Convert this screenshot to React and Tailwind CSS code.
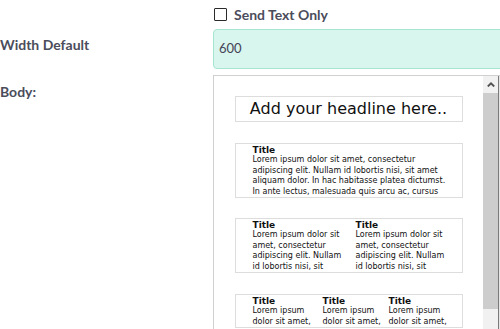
import React from "react";

const label = "text-[14px] font-bold text-[#4b4d5c] leading-[20px]";
const lato = { fontFamily: "Lato, 'Noto Sans', sans-serif" };
const dv = { fontFamily: "'DejaVu Sans', Verdana, sans-serif" };

function Col({ lines }) {
  return (
    <div>
      <div className="text-[9px] font-bold leading-[10px] whitespace-nowrap">Title</div>
      {lines.map((l, i) => (
        <div key={i} className="text-[8px] leading-[10.5px] whitespace-nowrap">
          {l}
        </div>
      ))}
    </div>
  );
}

export default function App() {
  return (
    <div className="w-[500px] h-[329px] overflow-hidden bg-white" style={lato}>
      <div className="flex h-[29px]">
        <div className="w-[213px] shrink-0" />
        <div className="flex items-center gap-[7px] pl-px">
          <div className="w-[13px] h-[13px] border border-[#2a2a2a] rounded-[1px] bg-white" />
          <span className={label}>Send Text Only</span>
        </div>
      </div>
      <div className="flex">
        <div className={`w-[213px] shrink-0 pt-[6px] ${label}`}>Width Default</div>
        <div className="w-[300px] shrink-0 h-[40px] flex items-center pl-[5px] bg-[#d8f5ee] border border-[#a6e6d1] rounded-[4px] text-[13px] text-[#444455]">
          600
        </div>
      </div>
      <div className="flex mt-[6px]">
        <div className={`w-[213px] shrink-0 pt-[7px] ${label}`}>Body:</div>
        <div className="w-[287px] shrink-0 h-[260px] flex border-t border-l border-[#d0d0d0]">
          <div className="w-[269px] shrink-0 flex flex-col items-center text-[#111]" style={dv}>
            <div className="mt-[20px] w-[228px] h-[26px] border border-[#dddddd] flex items-center justify-center text-[16px] leading-[24px] whitespace-nowrap">
              Add your headline here..
            </div>
            <div className="mt-[21px] w-[228px] border border-[#dddddd] pl-[17px] pt-px">
              <Col
                lines={[
                  "Lorem ipsum dolor sit amet, consectetur",
                  "adipiscing elit. Nullam id lobortis nisi, sit amet",
                  "aliquam dolor. In hac habitasse platea dictumst.",
                  "In ante lectus, malesuada quis arcu ac, cursus",
                ]}
              />
            </div>
            <div className="mt-[20px] w-[228px] border border-[#dddddd] pl-[17px] pt-px grid grid-cols-[103px_1fr]">
              <Col lines={["Lorem ipsum dolor sit", "amet, consectetur", "adipiscing elit. Nullam", "id lobortis nisi, sit"]} />
              <Col lines={["Lorem ipsum dolor sit", "amet, consectetur", "adipiscing elit. Nullam", "id lobortis nisi, sit"]} />
            </div>
            <div className="mt-[21px] w-[228px] border border-[#dddddd] pl-[17px] pt-px grid grid-cols-[70px_66px_1fr]">
              <Col lines={["Lorem ipsum", "dolor sit amet,"]} />
              <Col lines={["Lorem ipsum", "dolor sit amet,"]} />
              <Col lines={["Lorem ipsum", "dolor sit amet,"]} />
            </div>
          </div>
          <div className="w-[15px] shrink-0 flex flex-col bg-[#f1f1f1]">
            <div className="h-[16px] flex items-center justify-center">
              <svg width="8" height="5" viewBox="0 0 8 5">
                <path d="M0.8 4.5 L4 1.3 L7.2 4.5" fill="none" stroke="#505050" strokeWidth="1.8" />
              </svg>
            </div>
            <div className="h-[216px] mt-px bg-[#cdcdcd]" />
            <div className="flex-1" />
          </div>
          <div className="w-px shrink-0 bg-[#7a7a7a]" />
          <div className="w-px shrink-0 bg-[#e6e6e6]" />
        </div>
      </div>
    </div>
  );
}
